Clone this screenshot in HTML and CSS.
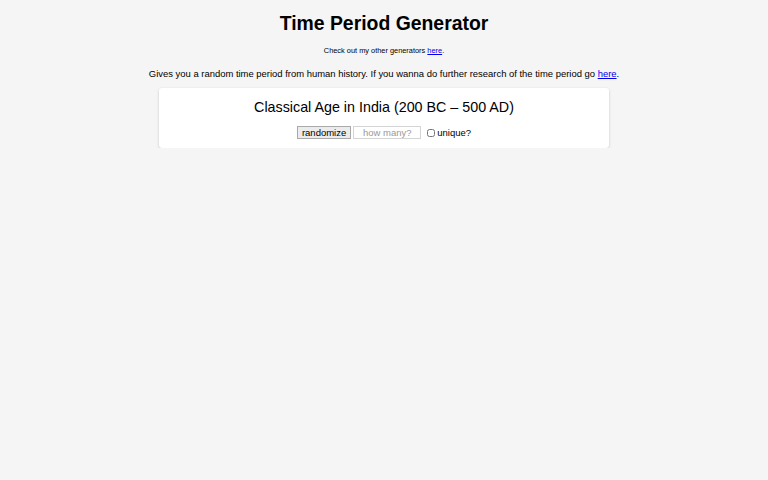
FILE: index.html
```html
<!DOCTYPE html>
<html lang="en">
<head>
    <meta charset="UTF-8">
    <meta name="viewport" content="width=device-width, initial-scale=1.0">
    <title>Time Period Generator</title>
    <link rel="stylesheet" href="styles.css">
</head>
<body>
    <h1 class="title">Time Period Generator</h1>
    <p class="other">Check out my other generators <a href="#">here</a>.</p>
    <p class="intro">Gives you a random time period from human history. If you wanna do further research of the time period go <a href="#">here</a>.</p>

    <div class="card">
        <div class="result" id="result">Classical Age in India (200 BC &ndash; 500 AD)</div>
        <div class="controls">
            <button class="randomize" id="randomize">randomize</button>
            <input class="count" type="text" placeholder="how many?">
            <label class="unique"><input type="checkbox"> unique?</label>
        </div>
    </div>
</body>
</html>
```

FILE: styles.css
```css
/* General styling */
body {
    font-family: "Liberation Sans", Arial, sans-serif;
    background-color: #f5f5f5;
    color: #000;
    margin: 0;
    padding: 12px 0 0;
    text-align: center;
}

.title {
    font-size: 19.4px;
    margin: 0;
    line-height: 23px;
}

.other {
    font-size: 7.4px;
    margin: 11px 0 0;
}

.intro {
    font-size: 9.45px;
    margin: 13px 0 0;
}

a {
    color: #00e;
}

/* Result card */
.card {
    width: 450px;
    margin: 9px auto 0;
    background-color: #fff;
    border-radius: 3px;
    box-shadow: 0 1px 3px rgba(0,0,0,0.18);
    padding: 10px 0 9px;
}

.result {
    font-size: 14.3px;
    line-height: 18px;
}

.controls {
    display: flex;
    justify-content: center;
    align-items: center;
    gap: 2px;
    margin-top: 10px;
    font-size: 9.5px;
}

.randomize {
    font-family: inherit;
    font-size: 9.5px;
    padding: 0 4px;
    height: 13px;
    background: #ececec;
    border: 1px solid #a9a9a9;
    border-radius: 0;
    color: #000;
}

.count {
    font-family: inherit;
    font-size: 9.5px;
    width: 68px;
    height: 13px;
    box-sizing: border-box;
    border: 1px solid #d4d4d4;
    padding: 0 2px;
    text-align: center;
}

.count::placeholder {
    color: #999;
}

.unique {
    display: flex;
    align-items: center;
    margin-left: 4px;
}

.unique input {
    margin: 0 2px 0 0;
    width: 8px;
    height: 8px;
}
```
